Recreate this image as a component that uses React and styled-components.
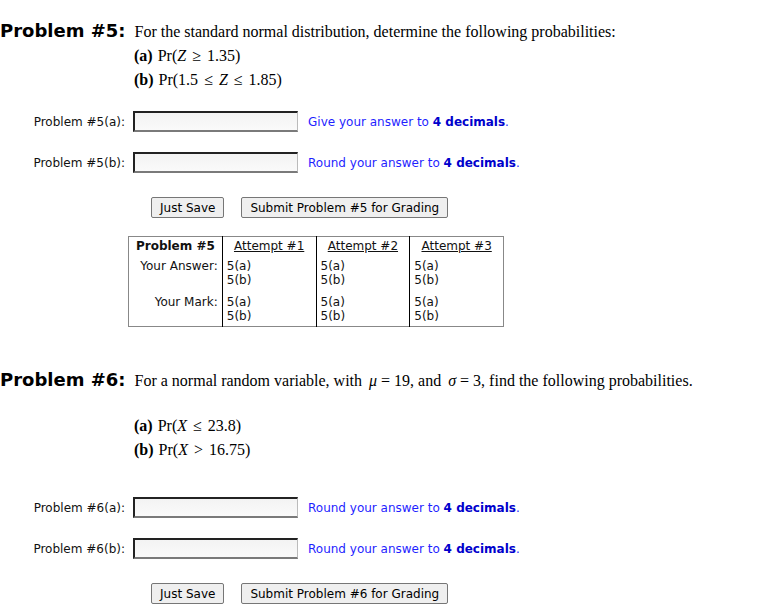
import styled, { createGlobalStyle } from "styled-components";

const GlobalStyle = createGlobalStyle`
  body {
    margin: 0;
    background: #ffffff;
    color: #000000;
  }
`;

//--------------- Page ---------------
const Page = styled.div`
  padding-top: 19px;
  display: flex;
  flex-direction: column;
`;

const Block = styled.div`
  display: flex;
  flex-direction: column;
  margin-top: ${(props) => props.top || 0}px;
`;

//--------------- Statement ---------------
const HeadRow = styled.div`
  display: flex;
  align-items: baseline;
  gap: 9px;
`;

const Heading = styled.span`
  font-family: "DejaVu Sans", Verdana, sans-serif;
  font-weight: 700;
  font-size: 18px;
  line-height: 24px;
  white-space: nowrap;
`;

const Statement = styled.span`
  font-family: "Liberation Serif", "Times New Roman", serif;
  font-size: 16px;
  line-height: 24px;
`;

const Parts = styled.div`
  display: flex;
  flex-direction: column;
  padding-left: 134px;
  margin-top: ${(props) => props.top || 0}px;
  font-family: "Liberation Serif", "Times New Roman", serif;
  font-size: 16px;
  line-height: 24px;
`;

const Letter = styled.b`
  margin-right: 5px;
`;

const Var = styled.i`
  margin-left: ${(props) => (props.greek ? 3 : 0)}px;
`;

const Op = styled.span`
  margin: 0 6px;
`;

//--------------- Answers ---------------
const AnswerList = styled.div`
  display: flex;
  flex-direction: column;
  gap: 20px;
  margin-top: ${(props) => props.top || 0}px;
`;

const AnswerRow = styled.div`
  display: flex;
  align-items: center;
  height: 21px;
`;

const Label = styled.label`
  width: 125px;
  text-align: right;
  font-family: "DejaVu Sans", Verdana, sans-serif;
  font-size: 12px;
  color: #111;
`;

const Field = styled.input`
  box-sizing: border-box;
  width: 165px;
  height: 21px;
  margin: 0 0 0 8px;
  padding: 1px 3px;
  border-width: 2px 1px 2px 2px;
  border-style: solid;
  border-color: #222 #bbb #7a7a7a #222;
  background: linear-gradient(#f3f3f3, #fafafa);
  font-family: "DejaVu Sans", Verdana, sans-serif;
  font-size: 12px;
  outline: none;
`;

const Hint = styled.span`
  margin-left: 10px;
  font-family: "DejaVu Sans", Verdana, sans-serif;
  font-size: 12px;
  color: #1f1fff;

  b {
    color: #0000cc;
  }
`;

//--------------- Buttons ---------------
const ButtonRow = styled.div`
  display: flex;
  gap: 17px;
  padding-left: 151px;
  margin-top: ${(props) => props.top || 0}px;
`;

const Button = styled.button`
  box-sizing: border-box;
  height: 21px;
  padding: 0 8px;
  border: 1px solid #767676;
  border-radius: 2px;
  background: #efefef;
  font-family: "DejaVu Sans", Verdana, sans-serif;
  font-size: 12px;
  color: #000;
  cursor: pointer;
`;

//--------------- Attempts table ---------------
const Table = styled.table`
  margin: 18px 0 0 128px;
  width: 376px;
  table-layout: fixed;
  border: 1px solid #888;
  border-collapse: collapse;
  font-family: "DejaVu Sans", Verdana, sans-serif;
  font-size: 12px;
  color: #111;
`;

const Th = styled.th`
  padding: 2px 0 6px;
  font-weight: ${(props) => (props.bold ? 700 : 400)};
  text-decoration: ${(props) => (props.bold ? "none" : "underline")};
  text-align: center;
  border-left: ${(props) => (props.bold ? "none" : "1px solid #000")};
`;

const RowHead = styled.td`
  padding: 0 4px ${(props) => props.bottom || 0}px 0;
  text-align: right;
  vertical-align: top;
  line-height: 14px;
  white-space: nowrap;
`;

const Cell = styled.td`
  padding: 0 4px ${(props) => props.bottom || 0}px;
  vertical-align: top;
  line-height: 14px;
  border-left: 1px solid #000;
`;

const Attempts = ({ n }) => (
  <Table>
    <thead>
      <tr>
        <Th bold>Problem #{n}</Th>
        <Th>Attempt #1</Th>
        <Th>Attempt #2</Th>
        <Th>Attempt #3</Th>
      </tr>
    </thead>
    <tbody>
      <tr>
        <RowHead bottom={8}>Your Answer:</RowHead>
        {[1, 2, 3].map((i) => (
          <Cell key={i} bottom={8}>
            {n}(a)
            <br />
            {n}(b)
          </Cell>
        ))}
      </tr>
      <tr>
        <RowHead bottom={3}>Your Mark:</RowHead>
        {[1, 2, 3].map((i) => (
          <Cell key={i} bottom={3}>
            {n}(a)
            <br />
            {n}(b)
          </Cell>
        ))}
      </tr>
    </tbody>
  </Table>
);

const Answers = ({ n, hints, top }) => (
  <AnswerList top={top}>
    {["a", "b"].map((p, i) => (
      <AnswerRow key={p}>
        <Label>
          Problem #{n}({p}):
        </Label>
        <Field type="text" />
        <Hint>
          {hints[i]} your answer to <b>4 decimals</b>.
        </Hint>
      </AnswerRow>
    ))}
  </AnswerList>
);

const App = () => {
  return (
    <Page>
      <GlobalStyle />
      <Block>
        <HeadRow>
          <Heading>Problem #5:</Heading>
          <Statement>
            For the standard normal distribution, determine the following
            probabilities:
          </Statement>
        </HeadRow>
        <Parts>
          <span>
            <Letter>(a)</Letter>Pr(<Var>Z</Var>
            <Op>≥</Op>1.35)
          </span>
          <span>
            <Letter>(b)</Letter>Pr(1.5<Op>≤</Op>
            <Var>Z</Var>
            <Op>≤</Op>1.85)
          </span>
        </Parts>
        <Answers n={5} hints={["Give", "Round"]} top={19} />
        <ButtonRow top={24}>
          <Button>Just Save</Button>
          <Button>Submit Problem #5 for Grading</Button>
        </ButtonRow>
        <Attempts n={5} />
      </Block>

      <Block top={41}>
        <HeadRow>
          <Heading>Problem #6:</Heading>
          <Statement>
            For a normal random variable, with <Var greek>μ</Var> = 19, and{" "}
            <Var greek>σ</Var> = 3, find the following probabilities.
          </Statement>
        </HeadRow>
        <Parts top={21}>
          <span>
            <Letter>(a)</Letter>Pr(<Var>X</Var>
            <Op>≤</Op>23.8)
          </span>
          <span>
            <Letter>(b)</Letter>Pr(<Var>X</Var>
            <Op>&gt;</Op>16.75)
          </span>
        </Parts>
        <Answers n={6} hints={["Round", "Round"]} top={35} />
        <ButtonRow top={24}>
          <Button>Just Save</Button>
          <Button>Submit Problem #6 for Grading</Button>
        </ButtonRow>
      </Block>
    </Page>
  );
};

export default App;
